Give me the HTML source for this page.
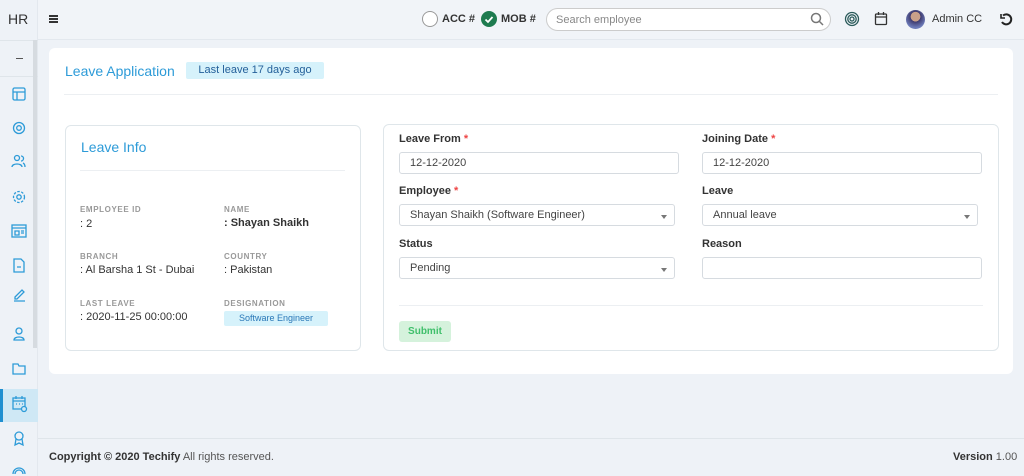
<!DOCTYPE html>
<html><head><meta charset="utf-8"><style>
*{box-sizing:border-box;margin:0;padding:0}
body{width:1024px;height:476px;overflow:hidden;background:#eef2f7;font-family:"Liberation Sans",sans-serif;position:relative;color:#333}
.a{position:absolute}
.side{left:0;top:0;width:38px;height:476px;background:#eef2f7;border-right:1px solid #e3e8ee}
.hdr{left:38px;top:0;width:986px;height:40px;background:#f1f4f8;border-bottom:1px solid #e3e8ee}
.ic{position:absolute;left:11px;width:16px;height:16px}
.card{background:#fff;border-radius:6px}
.lbl{font-size:8px;color:#999;letter-spacing:.6px;font-weight:bold}
.val{font-size:11px;color:#333}
.fl{font-size:11px;color:#333;font-weight:bold}
.fl b{color:#e44}
.inp{height:22px;border:1px solid #d6dbe0;border-radius:3px;background:#fff;font-size:11px;color:#444;padding:4px 10px}
.sel:after{content:"";position:absolute;right:7px;top:10px;border:3px solid transparent;border-top:4px solid #777}
</style></head><body>
<div class="a side">
<div class="a" style="left:8px;top:11px;font-size:14px;color:#333">HR</div>
<div class="a" style="left:0;top:40px;width:38px;border-top:1px solid #dfe5ea"></div>
<div class="a" style="left:16px;top:58px;width:7px;height:1px;background:#555"></div>
<div class="a" style="left:0;top:76px;width:38px;border-top:1px solid #dfe5ea"></div>
<div class="a" style="left:33px;top:40px;width:4px;height:308px;background:#d6dbe0"></div>
<div class="a" style="left:0;top:389px;width:38px;height:33px;background:#cfe8f5;border-left:3px solid #1f8fd0;border-radius:0 0 0 0"></div>
<svg class="a" style="left:0;top:0" width="38" height="476" fill="none" stroke="#2d9bd8" stroke-width="1.3">
<rect x="13" y="88" width="12" height="12" rx="1.5"/><path d="M13 92h12M17 92v8"/>
<circle cx="19" cy="128" r="5.5"/><circle cx="19" cy="128" r="2.3"/>
<circle cx="17" cy="158" r="2.5"/><path d="M12 167c0-4 10-4 10 0M21 156a2.5 2.5 0 010 5M23 163c2 1 2 3 2 4"/>
<circle cx="19" cy="197" r="2.2"/><circle cx="19" cy="197" r="5.5" stroke-dasharray="2.5 1.5"/>
<rect x="12" y="225" width="14" height="12"/><path d="M12 228h14M15 231h4v4h-4zM21 231h3M21 233h3"/>
<path d="M14 259h7l3 3v10h-10z M17 267h4"/>
<path d="M14 301h11M15 297l7-7 2 2-7 7h-2z"/>
<circle cx="19" cy="331" r="3"/><path d="M14 340c0-4 10-4 10 0z"/>
<path d="M13 364h5l1 2h6v8h-12z"/>
<rect x="13" y="398" width="12" height="11"/><path d="M13 401h12M16 396v3M22 396v3M16 404h1M19 404h1M22 404h1"/><circle cx="24" cy="409" r="2.5" fill="#cfe8f5"/>
<circle cx="19" cy="436" r="4"/><path d="M16 439l-1 6 4-2 4 2-1-6"/>
<path d="M13 474a6 6 0 0112 0M15 474a4 4 0 018 0"/>
</svg>
</div>
<div class="a hdr">
<div class="a" style="left:11px;top:15px;width:9px;height:2px;background:#333;box-shadow:0 3px 0 #333,0 6px 0 #333"></div>
<div class="a" style="left:384px;top:11px;width:16px;height:16px;border:1px solid #999;border-radius:50%;background:#fff"></div>
<div class="a" style="left:404px;top:13px;font-size:11px;font-weight:bold;color:#333">ACC #</div>
<div class="a" style="left:443px;top:11px;width:16px;height:16px;border-radius:50%;background:#1e7b4f"></div>
<svg class="a" style="left:443px;top:11px" width="16" height="16"><path d="M4.5 8.5l2.5 2.5 4.5-5" stroke="#fff" stroke-width="1.8" fill="none"/></svg>
<div class="a" style="left:463px;top:13px;font-size:11px;font-weight:bold;color:#333">MOB #</div>
<div class="a" style="left:508px;top:8px;width:285px;height:23px;border:1px solid #ccc;border-radius:12px;background:#fff;font-size:11px;color:#888;padding:5px 9px">Search employee</div>
<svg class="a" style="left:772px;top:12px" width="14" height="14" fill="none" stroke="#777" stroke-width="1.5"><circle cx="6" cy="6" r="4.5"/><path d="M9.5 9.5l3.5 3.5"/></svg>
<svg class="a" style="left:806px;top:11px" width="16" height="16" fill="none" stroke="#2a5a5a" stroke-width="1.3"><circle cx="8" cy="8" r="6.5"/><circle cx="8" cy="8" r="4.2"/><circle cx="8" cy="8" r="2"/></svg>
<svg class="a" style="left:836px;top:11px" width="14" height="15" fill="none" stroke="#333" stroke-width="1.3"><rect x="1.5" y="3" width="11" height="10.5" rx="1"/><path d="M1.5 6h11M4.5 1v3M9.5 1v3"/></svg>
<div class="a" style="left:868px;top:10px;width:19px;height:19px;border-radius:50%;background:radial-gradient(circle at 50% 35%,#c9a089 0 30%,#3e3a6e 32%,#6c7ab8 70%)"></div>
<div class="a" style="left:894px;top:13px;font-size:11px;color:#333">Admin CC</div>
<svg class="a" style="left:961px;top:12px" width="14" height="14" fill="none" stroke="#222" stroke-width="2"><path d="M4 3.5a5 5 0 11-1 6.5"/><path d="M2 2v4h4" stroke-width="1.6"/></svg>
</div>
<div class="a card" style="left:49px;top:48px;width:964px;height:326px"></div>
<div class="a" style="left:65px;top:63px;font-size:14px;color:#2d9bd8">Leave Application</div>
<div class="a" style="left:186px;top:62px;width:138px;height:17px;background:#d6f2fb;border-radius:2px;font-size:11px;color:#24609a;text-align:center;padding-top:2px">Last leave 17 days ago</div>
<div class="a" style="left:64px;top:94px;width:934px;border-top:1px solid #eceff2"></div>
<div class="a" style="left:65px;top:125px;width:296px;height:226px;border:1px solid #dfe6ea;border-radius:6px"></div>
<div class="a" style="left:81px;top:139px;font-size:14px;color:#2d9bd8">Leave Info</div>
<div class="a" style="left:80px;top:170px;width:265px;border-top:1px solid #eceff2"></div>
<div class="a lbl" style="left:80px;top:205px">EMPLOYEE ID</div><div class="a val" style="left:80px;top:218px">: 2</div>
<div class="a lbl" style="left:224px;top:205px">NAME</div><div class="a val" style="left:224px;top:217px;font-weight:bold">: Shayan Shaikh</div>
<div class="a lbl" style="left:80px;top:252px">BRANCH</div><div class="a val" style="left:80px;top:264px">: Al Barsha 1 St - Dubai</div>
<div class="a lbl" style="left:224px;top:252px">COUNTRY</div><div class="a val" style="left:224px;top:264px">: Pakistan</div>
<div class="a lbl" style="left:80px;top:299px">LAST LEAVE</div><div class="a val" style="left:80px;top:311px">: 2020-11-25 00:00:00</div>
<div class="a lbl" style="left:224px;top:299px">DESIGNATION</div>
<div class="a" style="left:224px;top:311px;width:104px;height:15px;background:#d6f2fb;border-radius:2px;font-size:9px;color:#2a78b8;text-align:center;padding-top:2px">Software Engineer</div>
<div class="a" style="left:383px;top:124px;width:616px;height:227px;border:1px solid #dfe6ea;border-radius:6px"></div>
<div class="a fl" style="left:399px;top:133px">Leave From <b>*</b></div>
<div class="a inp" style="left:399px;top:152px;width:280px">12-12-2020</div>
<div class="a fl" style="left:399px;top:185px">Employee <b>*</b></div>
<div class="a inp sel" style="left:399px;top:204px;width:276px">Shayan Shaikh (Software Engineer)</div>
<div class="a fl" style="left:399px;top:238px">Status</div>
<div class="a inp sel" style="left:399px;top:257px;width:276px">Pending</div>
<div class="a fl" style="left:702px;top:133px">Joining Date <b>*</b></div>
<div class="a inp" style="left:702px;top:152px;width:280px">12-12-2020</div>
<div class="a fl" style="left:702px;top:185px">Leave</div>
<div class="a inp sel" style="left:702px;top:204px;width:276px">Annual leave</div>
<div class="a fl" style="left:702px;top:238px">Reason</div>
<div class="a inp" style="left:702px;top:257px;width:280px"></div>
<div class="a" style="left:399px;top:305px;width:584px;border-top:1px solid #eceff2"></div>
<div class="a" style="left:399px;top:321px;width:52px;height:21px;background:#d5f2dc;border-radius:3px;font-size:10px;font-weight:bold;color:#3fbf6b;text-align:center;padding-top:5px">Submit</div>
<div class="a" style="left:38px;top:438px;width:986px;height:38px;border-top:1px solid #dfe5ea;background:#eef2f7"></div>
<div class="a" style="left:49px;top:451px;font-size:11px;color:#555"><b style="color:#333">Copyright © 2020 Techify</b> All rights reserved.</div>
<div class="a" style="left:953px;top:451px;font-size:11px;color:#555"><b style="color:#333">Version</b> 1.00</div>
</body></html>
